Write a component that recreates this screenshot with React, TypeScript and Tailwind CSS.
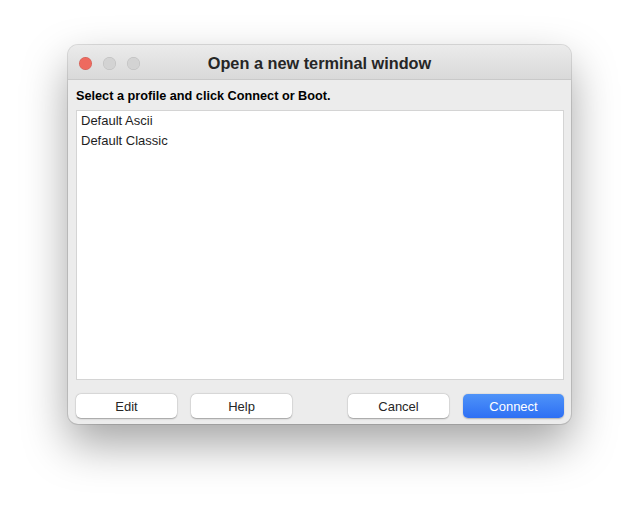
const font = { fontFamily: '"Liberation Sans", Arial, sans-serif' };

const Light = ({ className }: { className: string }) => (
	<span className={`block h-[13px] w-[13px] rounded-full ${className}`} />
);

const Button = ({ label, primary }: { label: string; primary?: boolean }) => (
	<button
		className={
			primary
				? 'h-6 w-[101px] rounded-[5px] bg-gradient-to-b from-[#4f93f8] to-[#2e6ff4] pt-[2px] text-[13px] text-white shadow-[0_0.5px_1.5px_rgba(0,0,0,0.25)]'
				: 'h-6 w-[101px] rounded-[5px] bg-white pt-[2px] text-[13px] text-[#262626] shadow-[0_0.5px_1.5px_rgba(0,0,0,0.3),0_0_0_0.5px_rgba(0,0,0,0.06)]'
		}
	>
		{label}
	</button>
);

export default function App() {
	return (
		<div className="min-h-[516px] w-[640px] bg-white pl-[68px] pt-[45px]" style={font}>
			<div className="flex h-[379px] w-[503px] flex-col overflow-hidden rounded-[10px] bg-[#ececec] shadow-[0_20px_45px_rgba(0,0,0,0.36),0_0_0_1px_rgba(0,0,0,0.12)]">
				{/* title bar */}
				<div className="relative flex h-[35px] shrink-0 items-center border-b border-[#c9c9c9] bg-gradient-to-b from-[#ebebeb] to-[#d9d9d9] pl-[11px] pt-[3px]">
					<div className="flex gap-[11px]">
						<Light className="bg-[#ee6a5f] shadow-[inset_0_0_0_0.5px_rgba(0,0,0,0.15)]" />
						<Light className="bg-[#d3d3d3] shadow-[inset_0_0_0_0.5px_rgba(0,0,0,0.12)]" />
						<Light className="bg-[#d3d3d3] shadow-[inset_0_0_0_0.5px_rgba(0,0,0,0.12)]" />
					</div>
					<p className="absolute inset-x-0 text-center text-[16.3px] font-bold text-[#262626]">
						Open a new terminal window
					</p>
				</div>

				{/* body */}
				<div className="flex flex-col px-[8px] pt-[8px]">
					<p className="h-4 text-[12.7px] font-bold leading-4 text-black">
						Select a profile and click Connect or Boot.
					</p>
					<div className="mt-[6px] flex h-[270px] w-[488px] flex-col border border-[#d4d4d4] bg-white pl-[4px] text-[13px] text-[#1e1e1e]">
						<p className="h-5 leading-5">Default Ascii</p>
						<p className="h-5 leading-5">Default Classic</p>
					</div>
					<div className="mt-[14px] flex w-[488px]">
						<div className="flex gap-[14px]">
							<Button label="Edit" />
							<Button label="Help" />
						</div>
						<div className="ml-auto flex gap-[14px]">
							<Button label="Cancel" />
							<Button label="Connect" primary />
						</div>
					</div>
				</div>
			</div>
		</div>
	);
}
